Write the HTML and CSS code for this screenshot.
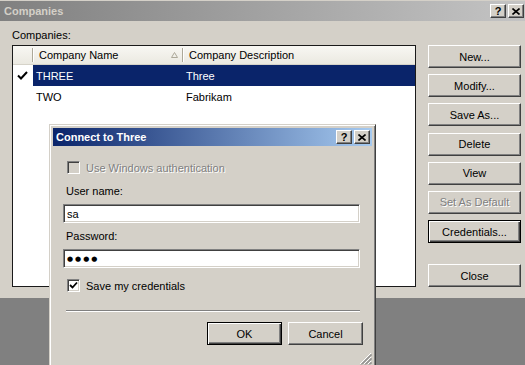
FILE: index.html
```html
<!DOCTYPE html>
<html>
<head>
<meta charset="utf-8">
<link rel="stylesheet" href="styles.css">
</head>
<body>
<div class="desktop">
  <div class="win">
    <div class="titlebar inactive">
      <span class="title">Companies</span>
      <div class="capbtns">
        <span class="capbtn">?</span>
        <span class="capbtn"><svg width="8" height="7" viewBox="0 0 8 7"><path d="M0.5 0.5 L7.5 6.5 M7.5 0.5 L0.5 6.5" stroke="#000" stroke-width="1.6"/></svg></span>
      </div>
    </div>
    <div class="winbody">
      <div class="label">Companies:</div>
      <div class="list">
        <div class="lhead">
          <div class="hcol c0"></div>
          <div class="hcol c1"><span>Company Name</span><svg class="sort" width="7" height="6" viewBox="0 0 7 6"><path d="M3.5 0.5 L0.5 5.5 L6.5 5.5 Z" fill="none" stroke="#aca899" stroke-width="1"/></svg></div>
          <div class="hcol c2">Company Description</div>
        </div>
        <div class="row selected">
          <div class="c0"><svg width="11" height="9" viewBox="0 0 11 9"><path d="M1 4.5 L4 7.5 L10 1" fill="none" stroke="#000" stroke-width="2"/></svg></div>
          <div class="c1">THREE</div>
          <div class="c2">Three</div>
        </div>
        <div class="row">
          <div class="c0"></div>
          <div class="c1">TWO</div>
          <div class="c2">Fabrikam</div>
        </div>
      </div>
      <div class="btncol">
        <div class="btn">New...</div>
        <div class="btn">Modify...</div>
        <div class="btn">Save As...</div>
        <div class="btn">Delete</div>
        <div class="btn">View</div>
        <div class="btn disabled">Set As Default</div>
        <div class="btn default">Credentials...</div>
        <div class="btn close">Close</div>
      </div>
    </div>
  </div>

  <div class="dialog">
    <div class="titlebar active">
      <span class="title">Connect to Three</span>
      <div class="capbtns">
        <span class="capbtn">?</span>
        <span class="capbtn"><svg width="8" height="7" viewBox="0 0 8 7"><path d="M0.5 0.5 L7.5 6.5 M7.5 0.5 L0.5 6.5" stroke="#000" stroke-width="1.6"/></svg></span>
      </div>
    </div>
    <div class="dbody">
      <div class="check disabled"><span class="cbox"></span><span>Use Windows authentication</span></div>
      <div class="dlabel user">User name:</div>
      <div class="field">sa</div>
      <div class="dlabel pass">Password:</div>
      <div class="field"><span class="dots">●●●●</span></div>
      <div class="check save"><span class="cbox on"><svg width="9" height="9" viewBox="0 0 9 9"><path d="M1 4 L3.5 6.5 L8 1.5" fill="none" stroke="#000" stroke-width="1.8"/></svg></span><span>Save my credentials</span></div>
      <div class="sep"></div>
      <div class="dbtns">
        <div class="btn default">OK</div>
        <div class="btn">Cancel</div>
      </div>
    </div>
    <svg class="grip" width="13" height="13" viewBox="0 0 13 13">
      <path d="M12 1 L1 12 M12 5 L5 12 M12 9 L9 12" stroke="#fff" stroke-width="1"/>
      <path d="M12.5 2 L2 12.5 M12.5 3 L3 12.5 M12.5 6 L6 12.5 M12.5 7 L7 12.5 M12.5 10 L10 12.5 M12.5 11 L11 12.5" stroke="#808080" stroke-width="1"/>
    </svg>
  </div>
</div>
</body>
</html>
```

FILE: styles.css
```css
html, body {
  margin: 0;
  padding: 0;
}
body {
  width: 525px;
  height: 365px;
  overflow: hidden;
  background: #808080;
  font-family: "Liberation Sans", Arial, sans-serif;
  font-size: 11px;
  color: #000;
}
.desktop {
  position: relative;
  width: 525px;
  height: 365px;
}
.win {
  height: 298px;
  box-sizing: border-box;
  background: #d4d0c8;
  border-top: 1px solid #d4d0c8;
  display: flex;
  flex-direction: column;
}
.titlebar {
  display: flex;
  align-items: center;
  justify-content: space-between;
  flex: none;
}
.titlebar .title {
  font-weight: bold;
  white-space: nowrap;
}
.titlebar.inactive {
  height: 20px;
  padding: 0 1px 0 4px;
  background: linear-gradient(to right, #808080, #c4c4c4);
  color: #d4d0c8;
}
.titlebar.active {
  height: 18px;
  padding: 0 2px 0 3px;
  background: linear-gradient(to right, #0a246a, #a6caf0);
  color: #fff;
}
.capbtns {
  display: flex;
  gap: 2px;
}
.capbtn {
  width: 16px;
  height: 14px;
  box-sizing: border-box;
  background: #d4d0c8;
  border: 1px solid;
  border-color: #fff #404040 #404040 #fff;
  box-shadow: inset -1px -1px #808080;
  display: flex;
  align-items: center;
  justify-content: center;
  color: #000;
  font-weight: bold;
  font-size: 11px;
  line-height: 12px;
}
.winbody {
  display: grid;
  grid-template-columns: 404px 93px;
  grid-template-rows: 16px 242px;
  column-gap: 12px;
  padding: 8px 0 0 12px;
}
.label {
  grid-column: 1;
  grid-row: 1;
  line-height: 13px;
}
.list {
  grid-column: 1;
  grid-row: 2;
  background: #fff;
  border: 1px solid #1a1a1a;
}
.lhead {
  display: flex;
  align-items: center;
  height: 18px;
  background: linear-gradient(#f8f7f3, #ebe9e1);
  border-bottom: 1px solid #d6d3c9;
}
.hcol {
  height: 14px;
  line-height: 14px;
  box-sizing: border-box;
  border-right: 1px solid #aca899;
  box-shadow: 1px 0 #fff;
  display: flex;
  align-items: center;
  white-space: nowrap;
}
.hcol.c2 {
  border-right: none;
  box-shadow: none;
}
.c0 {
  width: 20px;
  flex: none;
  box-sizing: border-box;
}
.c1 {
  width: 150px;
  flex: none;
  box-sizing: border-box;
}
.c2 {
  flex: 1;
}
.hcol.c1 {
  justify-content: space-between;
  padding: 0 4px 0 6px;
}
.hcol.c2 {
  padding-left: 6px;
}
.row {
  display: flex;
  height: 21px;
}
.row > div {
  display: flex;
  align-items: center;
}
.row .c0 {
  padding-left: 4px;
}
.row .c1, .row .c2 {
  padding-left: 3px;
}
.row.selected .c1, .row.selected .c2 {
  background: #0a246a;
  color: #fff;
}
.btncol {
  grid-column: 2;
  grid-row: 2;
  display: flex;
  flex-direction: column;
  gap: 6.2px;
}
.btn {
  height: 23px;
  box-sizing: border-box;
  background: #d4d0c8;
  border: 1px solid;
  border-color: #fff #404040 #404040 #fff;
  box-shadow: inset -1px -1px #808080;
  display: flex;
  align-items: center;
  justify-content: center;
  white-space: nowrap;
  flex: none;
}
.btn.default {
  border-color: #000;
  box-shadow: inset 1px 1px #fff, inset -1px -1px #404040, inset -2px -2px #808080;
}
.btn.disabled {
  color: #808080;
  text-shadow: 1px 1px #fff;
}
.btn.close {
  margin-top: auto;
}
.dialog {
  position: absolute;
  left: 49px;
  top: 124px;
  width: 327px;
  height: 246px;
  box-sizing: border-box;
  background: #d4d0c8;
  border: 1px solid;
  border-color: #d4d0c8 #404040 #404040 #d4d0c8;
  box-shadow: inset 1px 1px #fff, inset -1px -1px #808080;
  padding: 3px;
  display: flex;
  flex-direction: column;
}
.dbody {
  display: flex;
  flex-direction: column;
  padding: 15px 12px 0 10px;
}
.check {
  display: flex;
  align-items: center;
  gap: 6px;
  height: 13px;
  margin-left: 4px;
  white-space: nowrap;
}
.check.disabled {
  color: #808080;
  text-shadow: 1px 1px #fff;
}
.check.save {
  margin-top: 11px;
}
.cbox {
  width: 13px;
  height: 13px;
  box-sizing: border-box;
  border: 1px solid;
  border-color: #808080 #fff #fff #808080;
  box-shadow: inset 1px 1px #404040, inset -1px -1px #d4d0c8;
  background: #d4d0c8;
  display: flex;
  align-items: center;
  justify-content: center;
  flex: none;
}
.cbox.on {
  background: #fff;
}
.dlabel {
  line-height: 13px;
  margin-left: 3px;
}
.dlabel.user {
  margin-top: 11px;
}
.dlabel.pass {
  margin-top: 7px;
}
.field {
  height: 19px;
  margin-top: 6px;
  box-sizing: border-box;
  background: #fff;
  border: 1px solid;
  border-color: #808080 #fff #fff #808080;
  box-shadow: inset 1px 1px #404040, inset -1px -1px #d4d0c8;
  padding-left: 3px;
  display: flex;
  align-items: center;
}
.dots {
  font-family: "DejaVu Sans", sans-serif;
  font-size: 7px;
  letter-spacing: 2px;
}
.sep {
  margin: 18px 0 0 3px;
  border-top: 1px solid #808080;
  border-bottom: 1px solid #fff;
}
.dbtns {
  display: flex;
  justify-content: flex-end;
  gap: 6px;
  margin: 10px -3px 0 0;
}
.dbtns .btn {
  width: 75px;
}
.grip {
  position: absolute;
  right: 3px;
  bottom: 4px;
}
```
